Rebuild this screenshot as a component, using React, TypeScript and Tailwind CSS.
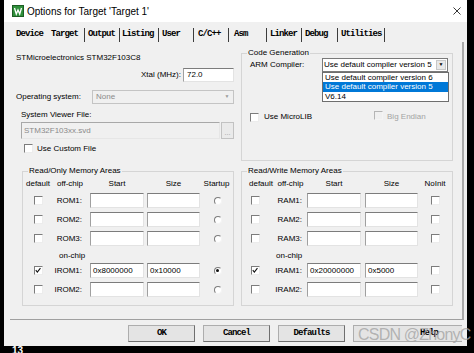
import React from "react";

const sans = "font-['Liberation_Sans',Arial,sans-serif]";
const mono = "font-['Liberation_Mono','Courier_New',monospace]";

type Tab = { label: string; w: string; pl: string; sep: boolean };

const TABS: Tab[] = [
  { label: "Device", w: "w-[36px]", pl: "pl-[4px]", sep: false },
  { label: "Target", w: "w-[37px]", pl: "pl-[3px]", sep: true },
  { label: "Output", w: "w-[35px]", pl: "pl-[3px]", sep: true },
  { label: "Listing", w: "w-[39px]", pl: "pl-[2px]", sep: true },
  { label: "User", w: "w-[35px]", pl: "pl-[3px]", sep: true },
  { label: "C/C++", w: "w-[35px]", pl: "pl-[4px]", sep: true },
  { label: "Asm", w: "w-[38px]", pl: "pl-[5px]", sep: true },
  { label: "Linker", w: "w-[35px]", pl: "pl-[3px]", sep: true },
  { label: "Debug", w: "w-[36px]", pl: "pl-[3px]", sep: true },
  { label: "Utilities", w: "w-[47px]", pl: "pl-[3px]", sep: true },
];

type MemRow = { name: string; start: string; size: string; def: boolean; flag: boolean };

const ROM_OFF: MemRow[] = [
  { name: "ROM1:", start: "", size: "", def: false, flag: false },
  { name: "ROM2:", start: "", size: "", def: false, flag: false },
  { name: "ROM3:", start: "", size: "", def: false, flag: false },
];
const ROM_ON: MemRow[] = [
  { name: "IROM1:", start: "0x8000000", size: "0x10000", def: true, flag: true },
  { name: "IROM2:", start: "", size: "", def: false, flag: false },
];
const RAM_OFF: MemRow[] = [
  { name: "RAM1:", start: "", size: "", def: false, flag: false },
  { name: "RAM2:", start: "", size: "", def: false, flag: false },
  { name: "RAM3:", start: "", size: "", def: false, flag: false },
];
const RAM_ON: MemRow[] = [
  { name: "IRAM1:", start: "0x20000000", size: "0x5000", def: true, flag: false },
  { name: "IRAM2:", start: "", size: "", def: false, flag: false },
];

function Check({ checked = false, disabled = false }: { checked?: boolean; disabled?: boolean }) {
  return (
    <span
      className={
        disabled
          ? "relative inline-block h-[9px] w-[9px] border border-t-[#b5b5b5] border-l-[#b5b5b5] border-b-[#f4f4f4] border-r-[#f4f4f4] bg-[#f0f0f0]"
          : "relative inline-block h-[9px] w-[9px] border border-t-[#7c7c7c] border-l-[#7c7c7c] border-b-[#ececec] border-r-[#ececec] bg-white"
      }
    >
      {checked && (
        <svg viewBox="0 0 9 9" className="absolute left-0 top-0 h-[7px] w-[7px]">
          <path d="M1 4 L3 6.5 L7 1.5" fill="none" stroke="#111" strokeWidth="1.4" />
        </svg>
      )}
    </span>
  );
}

function Radio({ on = false }: { on?: boolean }) {
  return (
    <span className="relative inline-flex h-[8px] w-[8px] items-center justify-center rounded-full border border-t-[#7c7c7c] border-l-[#7c7c7c] border-b-[#f4f4f4] border-r-[#f4f4f4] bg-white">
      {on && <span className="h-[3px] w-[3px] rounded-full bg-[#111]" />}
    </span>
  );
}

function Field({ w, value }: { w: string; value: string }) {
  return (
    <span
      className={`${w} flex h-[15px] items-center border border-t-[#7c7c7c] border-l-[#a0a0a0] border-b-[#e3e3e3] border-r-[#e3e3e3] bg-white pl-[2px] text-[8px] text-black`}
    >
      {value}
    </span>
  );
}

function RomRow({ row }: { row: MemRow }) {
  return (
    <div className="flex h-[19px] items-center">
      <div className="flex w-[30px] justify-center">
        <Check checked={row.def} />
      </div>
      <div className="w-[34px] pr-[5px] text-right text-[8px]">{row.name}</div>
      <div className="ml-[3px]">
        <Field w="w-[54px]" value={row.start} />
      </div>
      <div className="ml-[3px]">
        <Field w="w-[53px]" value={row.size} />
      </div>
      <div className="flex flex-1 justify-center pl-[2px]">
        <Radio on={row.flag} />
      </div>
    </div>
  );
}

function RamRow({ row }: { row: MemRow }) {
  return (
    <div className="flex h-[19px] items-center">
      <div className="flex w-[26px] justify-center">
        <Check checked={row.def} />
      </div>
      <div className="w-[37px] pr-[3px] text-right text-[8px]">{row.name}</div>
      <div className="ml-[2px]">
        <Field w="w-[54px]" value={row.start} />
      </div>
      <div className="ml-[4px]">
        <Field w="w-[53px]" value={row.size} />
      </div>
      <div className="flex flex-1 justify-center">
        <Check checked={row.flag} />
      </div>
    </div>
  );
}

function Group({ title, className, children }: { title: string; className: string; children: React.ReactNode }) {
  return (
    <fieldset className={`border border-[#d5d5d5] ${className}`}>
      <legend className="ml-[5px] px-[1px] text-[8px] leading-[10px] text-black">{title}</legend>
      {children}
    </fieldset>
  );
}

export default function App() {
  return (
    <div className={`relative h-[353px] w-[474px] overflow-hidden bg-black ${sans}`}>
      <div className="ml-[4px] flex h-[346px] w-[463px] flex-col bg-[#f0f0f0]">
        {/* title bar */}
        <div className="flex h-[22px] items-center bg-white">
          <svg viewBox="0 0 12 12" className="ml-[8px] h-[12px] w-[12px]">
            <rect x="0.5" y="0.5" width="11" height="11" fill="#2f8f3a" stroke="#1d5e24" />
            <path d="M2.5 3 L4.3 9 L6 5 L7.7 9 L9.5 3" fill="none" stroke="#fff" strokeWidth="1.3" />
          </svg>
          <span className="ml-[3px] text-[10px] text-black">Options for Target 'Target 1'</span>
          <svg viewBox="0 0 8 8" className="ml-auto mr-[6px] h-[8px] w-[8px]">
            <path d="M0.5 0.5 L7.5 7.5 M7.5 0.5 L0.5 7.5" stroke="#222" strokeWidth="0.9" />
          </svg>
        </div>

        {/* tabs */}
        <div className="flex h-[20px] items-end pl-[8px]">
          {TABS.map((t) => (
            <div
              key={t.label}
              className={`${t.w} ${t.pl} flex h-[14px] items-center ${t.sep ? "border-r border-[#3c3c3c]" : ""} ${mono} text-[9px] font-bold tracking-[-0.9px] text-black`}
            >
              {t.label}
            </div>
          ))}
        </div>

        {/* page */}
        <div className="ml-[6px] flex h-[278px] w-[454px] flex-col border-r-2 border-b border-r-[#a9a9a9] border-b-[#a0a0a0]">
          <div className="flex h-[119px] text-[8px] text-black">
            {/* left */}
            <div className="ml-[1px] flex w-[223px] flex-col pl-[5px] pt-[10px]">
              <div className="h-[11px] leading-[11px]">STMicroelectronics STM32F103C8</div>
              <div className="mt-[5px] flex h-[14px] items-center justify-end">
                <span className="mr-[2px]">Xtal (MHz):</span>
                <span className="flex h-[14px] w-[51px] items-center border border-t-[#7c7c7c] border-l-[#a0a0a0] border-b-[#e3e3e3] border-r-[#e3e3e3] bg-white pl-[3px]">
                  72.0
                </span>
              </div>
              <div className="mt-[8px] flex h-[14px] items-center">
                <span className="w-[76px]">Operating system:</span>
                <span className="flex h-[14px] w-[142px] items-center border border-[#c4c4c4] bg-[#f0f0f0] pl-[3px] text-[#8a8a8a]">
                  None
                  <span className="ml-auto mr-[1px] flex h-[10px] w-[10px] items-center justify-center text-[5px] text-[#9a9a9a]">▼</span>
                </span>
              </div>
              <div className="mt-[5px] h-[11px] pl-[5px] leading-[11px]">System Viewer File:</div>
              <div className="mt-[2px] flex h-[17px] pl-[5px]">
                <span className="flex h-[17px] w-[199px] items-center border border-t-[#a8a8a8] border-l-[#a8a8a8] border-b-[#e6e6e6] border-r-[#e6e6e6] bg-[#f0f0f0] pl-[2px] text-[#8a8a8a]">
                  STM32F103xx.svd
                </span>
                <span className="ml-[1px] flex h-[17px] w-[13px] items-end justify-center border border-[#c2c2c2] bg-[#eaeaea] pb-[2px] text-[7px] leading-[7px] text-[#9a9a9a]">
                  ...
                </span>
              </div>
              <div className="mt-[4px] flex h-[11px] items-center pl-[8px]">
                <Check />
                <span className="ml-[4px]">Use Custom File</span>
              </div>
            </div>

            {/* right */}
            <div className="ml-[7px] mt-[6px]">
              <Group title="Code Generation" className="h-[113px] w-[212px]">
                <div className="flex h-[14px] items-center pl-[8px]">
                  <span className="w-[72px]">ARM Compiler:</span>
                  <div className="relative">
                    <div className="flex h-[14px] w-[126px] items-center border border-[#7a7a7a] bg-white pl-[1px]">
                      Use default compiler version 5
                      <span className="ml-auto mr-[1px] flex h-[10px] w-[10px] items-center justify-center border border-[#c8c8c8] bg-[#e8e8e8] text-[5px] text-black">
                        ▼
                      </span>
                    </div>
                    <div className="absolute left-0 top-[14px] z-10 w-[127px] border border-[#6e6e6e] bg-white">
                      <div className="flex h-[9px] items-center pl-[2px]">Use default compiler version 6</div>
                      <div className="flex h-[10px] items-center bg-[#0078d7] pl-[2px] text-white">Use default compiler version 5</div>
                      <div className="flex h-[9px] items-center pl-[2px]">V6.14</div>
                    </div>
                  </div>
                </div>
                <div className="mt-[40px] flex h-[10px] items-center pl-[8px]">
                  <Check />
                  <span className="ml-[5px]">Use MicroLIB</span>
                  <span className="ml-[62px]">
                    <Check disabled />
                  </span>
                  <span className="ml-[4px] text-[#a3a3a3]">Big Endian</span>
                </div>
              </Group>
            </div>
          </div>

          {/* memory areas */}
          <div className="mt-[5px] flex text-[8px] text-black">
            <Group title="Read/Only Memory Areas" className="ml-[12px] w-[212px] pb-[6px]">
              <div className="flex h-[15px] items-center">
                <span className="w-[30px] text-center">default</span>
                <span className="w-[34px] text-center">off-chip</span>
                <span className="ml-[3px] w-[54px] text-center">Start</span>
                <span className="ml-[3px] w-[53px] text-center">Size</span>
                <span className="flex-1 text-center">Startup</span>
              </div>
              {ROM_OFF.map((r) => (
                <RomRow key={r.name} row={r} />
              ))}
              <div className="flex h-[13px] items-end">
                <span className="ml-[36px] leading-[10px]">on-chip</span>
              </div>
              {ROM_ON.map((r) => (
                <RomRow key={r.name} row={r} />
              ))}
            </Group>

            <Group title="Read/Write Memory Areas" className="ml-[7px] w-[212px] pb-[6px]">
              <div className="flex h-[15px] items-center">
                <span className="w-[34px] pl-[7px]">default</span>
                <span className="w-[29px] text-center">off-chip</span>
                <span className="ml-[2px] w-[54px] text-center">Start</span>
                <span className="ml-[4px] w-[53px] text-center">Size</span>
                <span className="flex-1 text-center">NoInit</span>
              </div>
              {RAM_OFF.map((r) => (
                <RamRow key={r.name} row={r} />
              ))}
              <div className="flex h-[13px] items-end">
                <span className="ml-[34px] leading-[10px]">on-chip</span>
              </div>
              {RAM_ON.map((r) => (
                <RamRow key={r.name} row={r} />
              ))}
            </Group>
          </div>
        </div>

        {/* buttons */}
        <div className={`relative mt-[5px] flex gap-[8px] pl-[124px] ${mono} text-[9px] font-bold tracking-[-0.9px] text-black`}>
          {["OK", "Cancel", "Defaults"].map((b) => (
            <div
              key={b}
              className="flex h-[17px] w-[67px] items-center justify-center border border-[#adadad] border-b-[#6f6f6f] border-r-[#6f6f6f] bg-[#e4e4e4]"
            >
              {b}
            </div>
          ))}
          <div className="flex h-[17px] w-[109px] items-center border border-[#adadad] border-r-0 bg-[#e4e4e4] pl-[66px]">
            Help
          </div>
          <span className={`pointer-events-none absolute left-[354px] top-[1px] whitespace-nowrap ${sans} text-[16px] font-normal leading-[18px] tracking-[-0.8px] text-[#a5a5a5]/80`}>
            CSDN @ZhonyC
          </span>
        </div>
      </div>
      <div className="pl-[12px] text-[10px] font-bold leading-[10px] text-white">13</div>
    </div>
  );
}
